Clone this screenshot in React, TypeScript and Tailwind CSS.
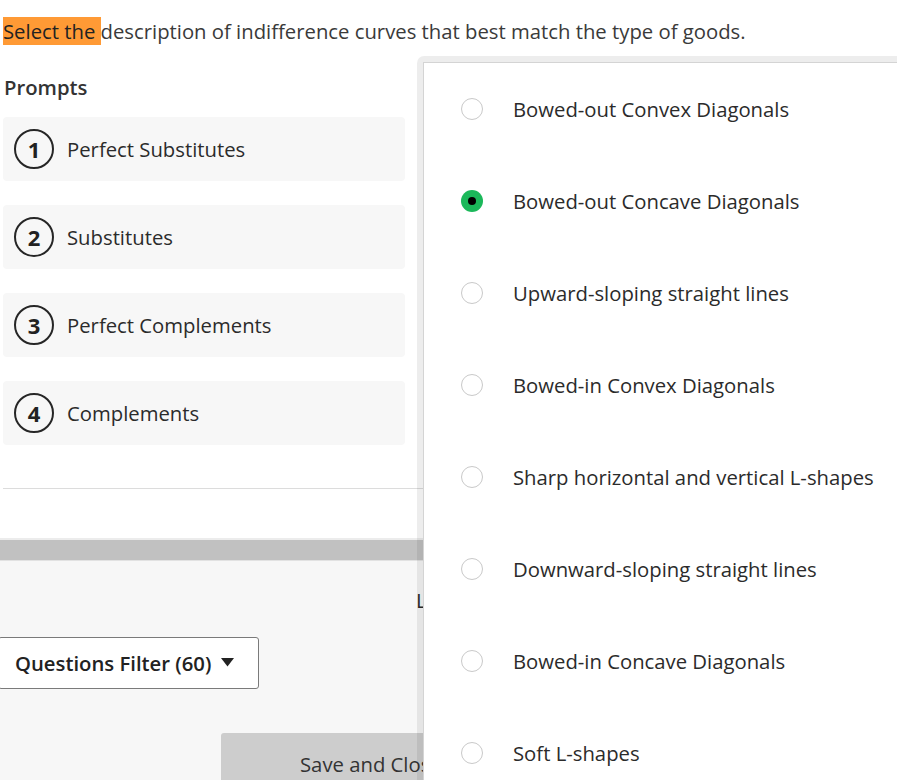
import React from "react";

const prompts = ["Perfect Substitutes", "Substitutes", "Perfect Complements", "Complements"];
const options = [
  "Bowed-out Convex Diagonals",
  "Bowed-out Concave Diagonals",
  "Upward-sloping straight lines",
  "Bowed-in Convex Diagonals",
  "Sharp horizontal and vertical L-shapes",
  "Downward-sloping straight lines",
  "Bowed-in Concave Diagonals",
  "Soft L-shapes",
];

export default function App() {
  return (
    <div
      className="relative w-[897px] h-[780px] overflow-hidden bg-white text-[#2b2b2b]"
      style={{ fontFamily: '"Open Sans", "Noto Sans", sans-serif' }}
    >
      <div className="flex flex-col">
        <p className="pl-[3px] pt-[17px] text-[20.3px] leading-[28px] text-[#3a3a3a] whitespace-nowrap">
          <span className="bg-[#ff9a35] text-[#222]">Select the </span>description of indifference curves that best match the type of goods.
        </p>
        <h2 className="pl-[4px] mt-[28px] text-[20.3px] leading-[28px] font-semibold text-[#333]">Prompts</h2>
        <div className="flex flex-col gap-[24px] mt-[16px] pl-[3px] w-[405px]">
          {prompts.map((p, i) => (
            <div key={p} className="h-[64px] bg-[#f7f7f7] rounded-[4px] flex items-center pl-[11px] gap-[13px]">
              <div className="w-[40px] h-[40px] rounded-full border-2 border-[#262626] flex items-center justify-center text-[22px] font-bold text-[#222]">
                {i + 1}
              </div>
              <span className="text-[20.3px] text-[#2b2b2b]">{p}</span>
            </div>
          ))}
        </div>
        <div className="ml-[3px] mt-[43px] w-[420px] h-px bg-[#dcdcdc]" />
        <div className="mt-[49px] h-[2px] bg-[#ececec]" />
        <div className="h-[20px] bg-[#c1c1c1]" />
        <div className="h-px bg-[#e2e2e2]" />
        <div className="h-[230px] bg-[#f7f7f7] flex flex-col">
          <div className="pl-[416px] mt-[25px] text-[20.3px] leading-[28px] text-[#2b2b2b]">L</div>
          <div className="mt-[23px] -ml-[2px] w-[261px] h-[54px] bg-white border border-[#7a7a7a] rounded-[3px] flex items-center pl-[16px] gap-[10px]">
            <span className="text-[20.3px] font-semibold text-[#222]">Questions Filter (60)</span>
            <svg width="13" height="9" viewBox="0 0 13 9"><path d="M0 0 H13 L6.5 8.5 Z" fill="#222" /></svg>
          </div>
          <div className="mt-[44px] ml-[221px] w-[260px] h-[60px] bg-[#cdcdcd] rounded-tl-[3px] pl-[79px] pt-[16px] text-[20.3px] text-[#333] whitespace-nowrap">
            Save and Close
          </div>
        </div>
      </div>

      <div className="absolute left-[417px] top-[56px] w-[500px] h-[740px] bg-black/[0.07] rounded-tl-[7px] pl-[6px] pt-[6px]">
        <div className="w-full h-full bg-white border-l border-t border-[#d4d4d4]">
          {options.map((o, i) => (
            <div key={o} className="h-[92px] flex items-center pl-[37px]">
              {i === 1 ? (
                <div className="w-[22px] h-[22px] rounded-full bg-[#1bb85a] flex items-center justify-center">
                  <div className="w-[8px] h-[8px] rounded-full bg-black" />
                </div>
              ) : (
                <div className="w-[22px] h-[22px] rounded-full border border-[#c9c9c9] bg-white" />
              )}
              <span className="ml-[30px] text-[20.3px] text-[#2b2b2b] whitespace-nowrap">{o}</span>
            </div>
          ))}
        </div>
      </div>
    </div>
  );
}
